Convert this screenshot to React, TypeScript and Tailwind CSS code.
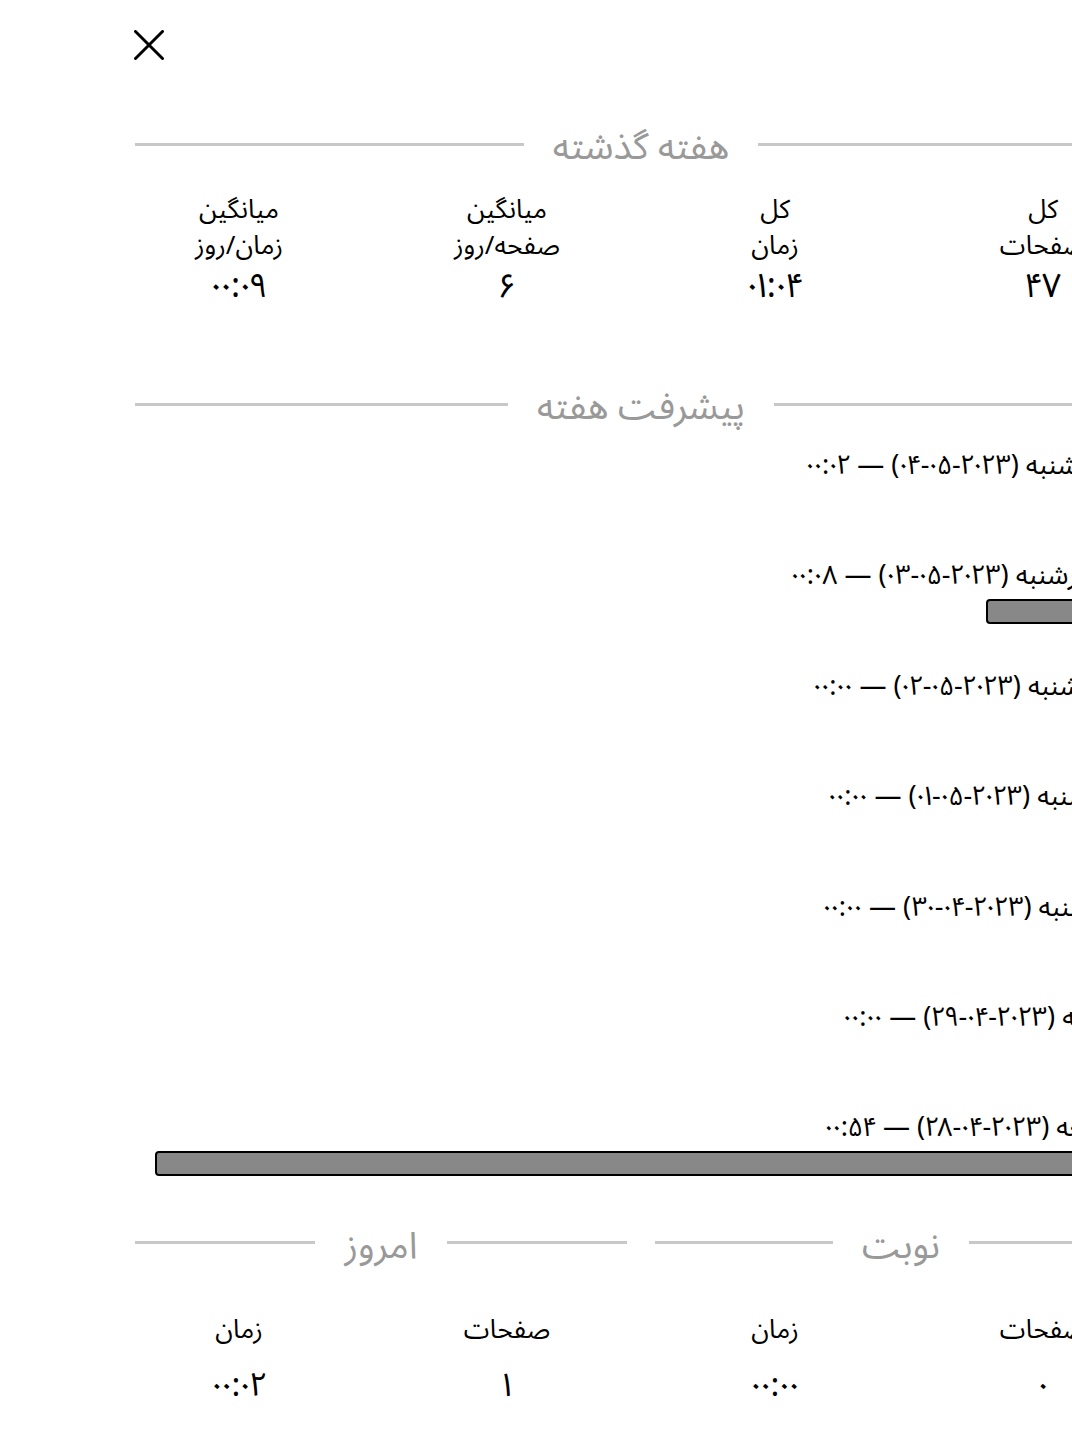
import React from "react";

const FONT = '"Noto Sans Arabic", "Noto Sans", "DejaVu Sans", sans-serif';

function Header({ title }: { title: string }) {
  return (
    <div className="flex h-[40px] items-center">
      <div className="h-[3px] flex-1 bg-[#c8c8c8]" />
      <div className="mx-[29px] pt-[6px] text-[37px] leading-[40px] text-[#999999]">{title}</div>
      <div className="h-[3px] flex-1 bg-[#c8c8c8]" />
    </div>
  );
}

const topStats = [
  { l1: "کل", l2: "صفحات", v: "۴۷" },
  { l1: "کل", l2: "زمان", v: "۰۱:۰۴" },
  { l1: "میانگین", l2: "صفحه/روز", v: "۶" },
  { l1: "میانگین", l2: "زمان/روز", v: "۰۰:۰۹" },
];

const days = [
  { num: "۰۰:۰۲ — (۰۴-۰۵-۲۰۲۳)", day: "پنجشنبه", m: 2 },
  { num: "۰۰:۰۸ — (۰۳-۰۵-۲۰۲۳)", day: "چهارشنبه", m: 8 },
  { num: "۰۰:۰۰ — (۰۲-۰۵-۲۰۲۳)", day: "سه‌شنبه", m: 0 },
  { num: "۰۰:۰۰ — (۰۱-۰۵-۲۰۲۳)", day: "دوشنبه", m: 0 },
  { num: "۰۰:۰۰ — (۳۰-۰۴-۲۰۲۳)", day: "یکشنبه", m: 0 },
  { num: "۰۰:۰۰ — (۲۹-۰۴-۲۰۲۳)", day: "شنبه", m: 0 },
  { num: "۰۰:۵۴ — (۲۸-۰۴-۲۰۲۳)", day: "جمعه", m: 54 },
];

const bottomStats = [
  { l: "صفحات", v: "۰" },
  { l: "زمان", v: "۰۰:۰۰" },
  { l: "صفحات", v: "۱" },
  { l: "زمان", v: "۰۰:۰۲" },
];

export default function App() {
  return (
    <div
      dir="ltr"
      className="relative h-[1448px] w-[1072px] overflow-hidden bg-white text-black proportional-nums"
      style={{ fontFamily: FONT }}
    >
      <div className="absolute left-[134px] top-[30px] h-[30px] w-[30px]">
        <svg width="30" height="30" viewBox="0 0 30 30">
          <path d="M1.5 1.5 L28.5 28.5 M28.5 1.5 L1.5 28.5" stroke="#000" strokeWidth="3" strokeLinecap="round" />
        </svg>
      </div>
      <div dir="rtl" className="flex w-[1282px] flex-col px-[135px] pt-[124px]">
        <Header title="هفته گذشته" />
        <div className="-mx-[30px] grid grid-cols-4 pt-[28px]">
          {topStats.map((s, i) => (
            <div key={i} className="flex flex-col items-center">
              <div className="text-[26px] leading-[36px]">{s.l1}</div>
              <div className="text-[26px] leading-[36px]">{s.l2}</div>
              <div dir="ltr" className="pt-[2px] text-[34px] leading-[40px] whitespace-nowrap">
                {s.v}
              </div>
            </div>
          ))}
        </div>
        <div className="mt-[78px]">
          <Header title="پیشرفت هفته" />
        </div>
        <div className="flex flex-col pl-[20px] pr-[17px] pt-[24px]">
          {days.map((d, i) => (
            <div key={i} className="flex h-[110.4px] flex-col">
              <div dir="ltr" className="mr-[15px] text-right text-[27px] leading-[36px] whitespace-nowrap">
                {d.num} {d.day}
              </div>
              <div className="mt-[5px] flex h-[25px] justify-start">
                {d.m > 0 && (
                  <div
                    className="h-[25px] rounded-[4px] border-2 border-black bg-[#888888]"
                    style={{ width: `${(975 * d.m) / 54}px` }}
                  />
                )}
              </div>
            </div>
          ))}
        </div>
        <div className="mt-[2px] grid grid-cols-2 gap-[28px]">
          <Header title="نوبت" />
          <Header title="امروز" />
        </div>
        <div className="-mx-[30px] grid grid-cols-4 pt-[49px]">
          {bottomStats.map((s, i) => (
            <div key={i} className="flex flex-col items-center">
              <div className="text-[26px] leading-[36px]">{s.l}</div>
              <div dir="ltr" className="mt-[18px] text-[33px] leading-[40px] whitespace-nowrap">
                {s.v}
              </div>
            </div>
          ))}
        </div>
      </div>
    </div>
  );
}
